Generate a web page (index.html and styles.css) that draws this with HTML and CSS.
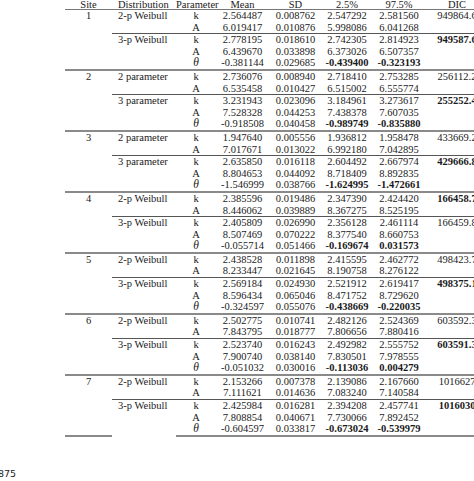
FILE: index.html
```html
<!DOCTYPE html>
<html>
<head>
<meta charset="utf-8">
<link rel="stylesheet" href="styles.css">
</head>
<body>
<table class="tbl">
<colgroup>
<col class="c-site"><col class="c-dist"><col class="c-par"><col class="c-num"><col class="c-num"><col class="c-p25"><col class="c-p97"><col class="c-dic">
</colgroup>
<thead>
<tr><th>Site</th><th class="dist">Distribution</th><th>Parameter</th><th>Mean</th><th>SD</th><th>2.5%</th><th>97.5%</th><th>DIC</th></tr>
</thead>
<tbody class="site">
<tr class="first"><td rowspan="5">1</td><td class="dist" rowspan="2">2-p Weibull</td><td>k</td><td>2.564487</td><td>0.008762</td><td>2.547292</td><td>2.581560</td><td>949864.6</td></tr>
<tr><td>A</td><td>6.019417</td><td>0.010876</td><td>5.998086</td><td>6.041268</td><td></td></tr>
<tr class="inner"><td class="dist" rowspan="3">3-p Weibull</td><td>k</td><td>2.778195</td><td>0.018610</td><td>2.742305</td><td>2.814923</td><td class="b">949587.6</td></tr>
<tr><td>A</td><td>6.439670</td><td>0.033898</td><td>6.373026</td><td>6.507357</td><td></td></tr>
<tr><td class="th">θ</td><td>-0.381144</td><td>0.029685</td><td class="b">-0.439400</td><td class="b">-0.323193</td><td></td></tr>
</tbody>
<tbody class="site">
<tr class="first"><td rowspan="5">2</td><td class="dist" rowspan="2">2 parameter</td><td>k</td><td>2.736076</td><td>0.008940</td><td>2.718410</td><td>2.753285</td><td>256112.2</td></tr>
<tr><td>A</td><td>6.535458</td><td>0.010427</td><td>6.515002</td><td>6.555774</td><td></td></tr>
<tr class="inner"><td class="dist" rowspan="3">3 parameter</td><td>k</td><td>3.231943</td><td>0.023096</td><td>3.184961</td><td>3.273617</td><td class="b">255252.4</td></tr>
<tr><td>A</td><td>7.528328</td><td>0.044253</td><td>7.438378</td><td>7.607035</td><td></td></tr>
<tr><td class="th">θ</td><td>-0.918508</td><td>0.040458</td><td class="b">-0.989749</td><td class="b">-0.835880</td><td></td></tr>
</tbody>
<tbody class="site">
<tr class="first"><td rowspan="5">3</td><td class="dist" rowspan="2">2 parameter</td><td>k</td><td>1.947640</td><td>0.005556</td><td>1.936812</td><td>1.958478</td><td>433669.2</td></tr>
<tr><td>A</td><td>7.017671</td><td>0.013022</td><td>6.992180</td><td>7.042895</td><td></td></tr>
<tr class="inner"><td class="dist" rowspan="3">3 parameter</td><td>k</td><td>2.635850</td><td>0.016118</td><td>2.604492</td><td>2.667974</td><td class="b">429666.8</td></tr>
<tr><td>A</td><td>8.804653</td><td>0.044092</td><td>8.718409</td><td>8.892835</td><td></td></tr>
<tr><td class="th">θ</td><td>-1.546999</td><td>0.038766</td><td class="b">-1.624995</td><td class="b">-1.472661</td><td></td></tr>
</tbody>
<tbody class="site">
<tr class="first"><td rowspan="5">4</td><td class="dist" rowspan="2">2-p Weibull</td><td>k</td><td>2.385596</td><td>0.019486</td><td>2.347390</td><td>2.424420</td><td class="b">166458.7</td></tr>
<tr><td>A</td><td>8.446062</td><td>0.039889</td><td>8.367275</td><td>8.525195</td><td></td></tr>
<tr class="inner"><td class="dist" rowspan="3">3-p Weibull</td><td>k</td><td>2.405809</td><td>0.026990</td><td>2.356128</td><td>2.461114</td><td>166459.8</td></tr>
<tr><td>A</td><td>8.507469</td><td>0.070222</td><td>8.377540</td><td>8.660753</td><td></td></tr>
<tr><td class="th">θ</td><td>-0.055714</td><td>0.051466</td><td class="b">-0.169674</td><td class="b">0.031573</td><td></td></tr>
</tbody>
<tbody class="site">
<tr class="first"><td rowspan="5">5</td><td class="dist" rowspan="2">2-p Weibull</td><td>k</td><td>2.438528</td><td>0.011898</td><td>2.415595</td><td>2.462772</td><td>498423.7</td></tr>
<tr><td>A</td><td>8.233447</td><td>0.021645</td><td>8.190758</td><td>8.276122</td><td></td></tr>
<tr class="inner"><td class="dist" rowspan="3">3-p Weibull</td><td>k</td><td>2.569184</td><td>0.024930</td><td>2.521912</td><td>2.619417</td><td class="b">498375.1</td></tr>
<tr><td>A</td><td>8.596434</td><td>0.065046</td><td>8.471752</td><td>8.729620</td><td></td></tr>
<tr><td class="th">θ</td><td>-0.324597</td><td>0.055076</td><td class="b">-0.438669</td><td class="b">-0.220035</td><td></td></tr>
</tbody>
<tbody class="site">
<tr class="first"><td rowspan="5">6</td><td class="dist" rowspan="2">2-p Weibull</td><td>k</td><td>2.502775</td><td>0.010741</td><td>2.482126</td><td>2.524369</td><td>603592.3</td></tr>
<tr><td>A</td><td>7.843795</td><td>0.018777</td><td>7.806656</td><td>7.880416</td><td></td></tr>
<tr class="inner"><td class="dist" rowspan="3">3-p Weibull</td><td>k</td><td>2.523740</td><td>0.016243</td><td>2.492982</td><td>2.555752</td><td class="b">603591.3</td></tr>
<tr><td>A</td><td>7.900740</td><td>0.038140</td><td>7.830501</td><td>7.978555</td><td></td></tr>
<tr><td class="th">θ</td><td>-0.051032</td><td>0.030016</td><td class="b">-0.113036</td><td class="b">0.004279</td><td></td></tr>
</tbody>
<tbody class="site last">
<tr class="first"><td rowspan="5">7</td><td class="dist" rowspan="2">2-p Weibull</td><td>k</td><td>2.153266</td><td>0.007378</td><td>2.139086</td><td>2.167660</td><td>1016627</td></tr>
<tr><td>A</td><td>7.111621</td><td>0.014636</td><td>7.083240</td><td>7.140584</td><td></td></tr>
<tr class="inner"><td class="dist" rowspan="3">3-p Weibull</td><td>k</td><td>2.425984</td><td>0.016281</td><td>2.394208</td><td>2.457741</td><td class="b">1016030</td></tr>
<tr><td>A</td><td>7.808854</td><td>0.040671</td><td>7.730066</td><td>7.892452</td><td></td></tr>
<tr class="lastrow"><td class="th">θ</td><td>-0.604597</td><td>0.033817</td><td class="b">-0.673024</td><td class="b">-0.539979</td><td></td></tr>
</tbody>
</table>
<div class="footer">875</div>
</body>
</html>
```
FILE: styles.css
```css
html, body {
  margin: 0;
  padding: 0;
  overflow: hidden;
  background: #fff;
}
body {
  width: 474px;
  height: 481px;
  font-family: "Liberation Serif", "Times New Roman", serif;
  color: #1a1a1a;
}
.tbl {
  margin-left: 65px;
  border-collapse: collapse;
  table-layout: fixed;
  width: 423px;
  font-size: 10.5px;
}
.c-site { width: 47px; }
.c-dist { width: 64px; }
.c-par { width: 40px; }
.c-num { width: 53px; }
.c-p25 { width: 50px; }
.c-p97 { width: 54px; }
.c-dic { width: 62px; }
.tbl th {
  font-weight: normal;
  height: 9px;
  line-height: 9px;
  padding: 0;
  text-align: center;
  border-bottom: 1.5px solid #777;
  white-space: nowrap;
}
.tbl td {
  height: 11.6px;
  line-height: 11.6px;
  padding: 0;
  text-align: center;
  white-space: nowrap;
  vertical-align: middle;
}
.tbl .dist {
  text-align: left;
  padding-left: 6px;
}
.tbl td.dist { vertical-align: top; }
.tbl tr.first td { border-top: 2px solid #8a8a8a; }
.tbl thead + tbody tr.first td { border-top: 1.5px solid #777; }
.tbl tr.inner td { border-top: 1px solid #555; }
.tbl tr.lastrow td { border-bottom: 2px solid #8a8a8a; }
.tbl td[rowspan="5"] { border-bottom: 2px solid #8a8a8a; vertical-align: top; }
.tbl .b { font-weight: bold; }
.tbl .th { font-style: italic; font-size: 11.5px; }
.footer {
  margin-top: 32px;
  margin-left: -2px;
  font-family: "DejaVu Sans", sans-serif;
  font-size: 9.5px;
  line-height: 10px;
  color: #222;
}
```
